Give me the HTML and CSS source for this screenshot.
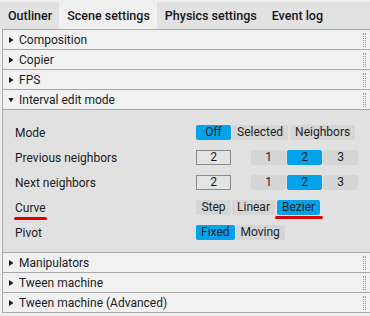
FILE: index.html
```html
<!DOCTYPE html>
<html>
<head>
<meta charset="utf-8">
<link rel="stylesheet" href="styles.css">
</head>
<body>
<div class="tabs">
  <div class="tab">Outliner</div>
  <div class="tab active">Scene settings</div>
  <div class="tab">Physics settings</div>
  <div class="tab">Event log</div>
</div>
<div class="panel">
  <div class="header"><svg class="tri" width="6" height="8" viewBox="0 0 6 8"><path d="M1 1 L5.5 4 L1 7 Z"/></svg><span class="title">Composition</span><span class="grip"></span></div>
  <div class="header"><svg class="tri" width="6" height="8" viewBox="0 0 6 8"><path d="M1 1 L5.5 4 L1 7 Z"/></svg><span class="title">Copier</span><span class="grip"></span></div>
  <div class="header"><svg class="tri" width="6" height="8" viewBox="0 0 6 8"><path d="M1 1 L5.5 4 L1 7 Z"/></svg><span class="title">FPS</span><span class="grip"></span></div>
  <div class="header"><svg class="tri" width="6" height="8" viewBox="0 0 6 8"><path d="M0.5 2 L5.5 2 L3 6.5 Z"/></svg><span class="title">Interval edit mode</span><span class="grip"></span></div>
  <div class="content">
    <div class="row">
      <span class="label">Mode</span>
      <div class="controls">
        <span class="btn on">Off</span><span class="btn">Selected</span><span class="btn gap">Neighbors</span>
      </div>
    </div>
    <div class="row">
      <span class="label">Previous neighbors</span>
      <div class="controls">
        <span class="num">2</span>
        <div class="group"><span class="btn">1</span><span class="btn on">2</span><span class="btn">3</span></div>
      </div>
    </div>
    <div class="row">
      <span class="label">Next neighbors</span>
      <div class="controls">
        <span class="num">2</span>
        <div class="group"><span class="btn">1</span><span class="btn on">2</span><span class="btn">3</span></div>
      </div>
    </div>
    <div class="row">
      <span class="label"><span class="mark">Curve</span></span>
      <div class="controls">
        <span class="btn">Step</span><span class="btn">Linear</span><span class="btn on gap mark mark-wide">Bezier</span>
      </div>
    </div>
    <div class="row">
      <span class="label">Pivot</span>
      <div class="controls">
        <span class="btn on">Fixed</span><span class="btn">Moving</span>
      </div>
    </div>
  </div>
  <div class="header"><svg class="tri" width="6" height="8" viewBox="0 0 6 8"><path d="M1 1 L5.5 4 L1 7 Z"/></svg><span class="title">Manipulators</span><span class="grip"></span></div>
  <div class="header"><svg class="tri" width="6" height="8" viewBox="0 0 6 8"><path d="M1 1 L5.5 4 L1 7 Z"/></svg><span class="title">Tween machine</span><span class="grip"></span></div>
  <div class="header"><svg class="tri" width="6" height="8" viewBox="0 0 6 8"><path d="M1 1 L5.5 4 L1 7 Z"/></svg><span class="title">Tween machine (Advanced)</span><span class="grip"></span></div>
</div>
</body>
</html>
```
FILE: styles.css
```css
html, body {
  margin: 0;
  padding: 0;
  background: #f0f0f0;
  font-family: Roboto, "Liberation Sans", sans-serif;
  font-size: 12px;
  color: #1b1b1f;
  width: 370px;
  height: 316px;
  overflow: hidden;
}

.tabs {
  display: flex;
  height: 27px;
  margin-top: 2px;
  background: #e2e2e2;
}

.tab {
  display: flex;
  align-items: center;
  padding: 0 7px 0 8px;
  font-weight: 500;
  font-size: 12.5px;
  color: #16161a;
}

.tab.active {
  background: #f0f0f0;
}

.panel {
  margin-left: 2px;
  border-left: 1px solid #a8a8a8;
  border-top: 1px solid #a8a8a8;
}

.header {
  display: flex;
  align-items: center;
  height: 19px;
  background: #f1f1f1;
  border-bottom: 1px solid #a8a8a8;
}

.tri {
  margin-left: 5px;
  margin-right: 5px;
  fill: #1b1b1b;
}

.title {
  flex: 1;
}

.grip {
  width: 1px;
  height: 14px;
  margin-right: 4px;
  border-left: 1px dotted #9a9a9a;
  border-right: 1px dotted #9a9a9a;
}

.content {
  background: #e1e1e1;
  padding: 10px 0 7px 12px;
  border-bottom: 1px solid #a8a8a8;
}

.row {
  display: grid;
  grid-template-columns: 181px 1fr;
  align-items: center;
  height: 25px;
}

.controls {
  display: flex;
  align-items: center;
  gap: 1px;
}

.group {
  display: flex;
  gap: 1px;
  margin-left: 19px;
}

.btn {
  display: inline-flex;
  justify-content: center;
  align-items: center;
  min-width: 25px;
  height: 15px;
  padding: 0 5px;
  background: #d5d5d5;
  border-radius: 2px;
  color: #1e1e24;
  line-height: 15px;
}

.btn.on {
  background: #03a3ec;
}

.btn.gap {
  margin-left: 1px;
}

.num {
  box-sizing: border-box;
  width: 35px;
  height: 15px;
  border: 1px solid #8a8a8a;
  background: #e4e4e4;
  display: inline-flex;
  justify-content: center;
  align-items: center;
  line-height: 13px;
}

.mark {
  position: relative;
}

.mark::after {
  content: "";
  position: absolute;
  left: -1px;
  right: -1px;
  bottom: -5px;
  height: 3px;
  border-radius: 2px;
  background: #e00000;
}

.mark-wide::after {
  left: -2px;
  right: -3px;
  bottom: -4px;
}
```
